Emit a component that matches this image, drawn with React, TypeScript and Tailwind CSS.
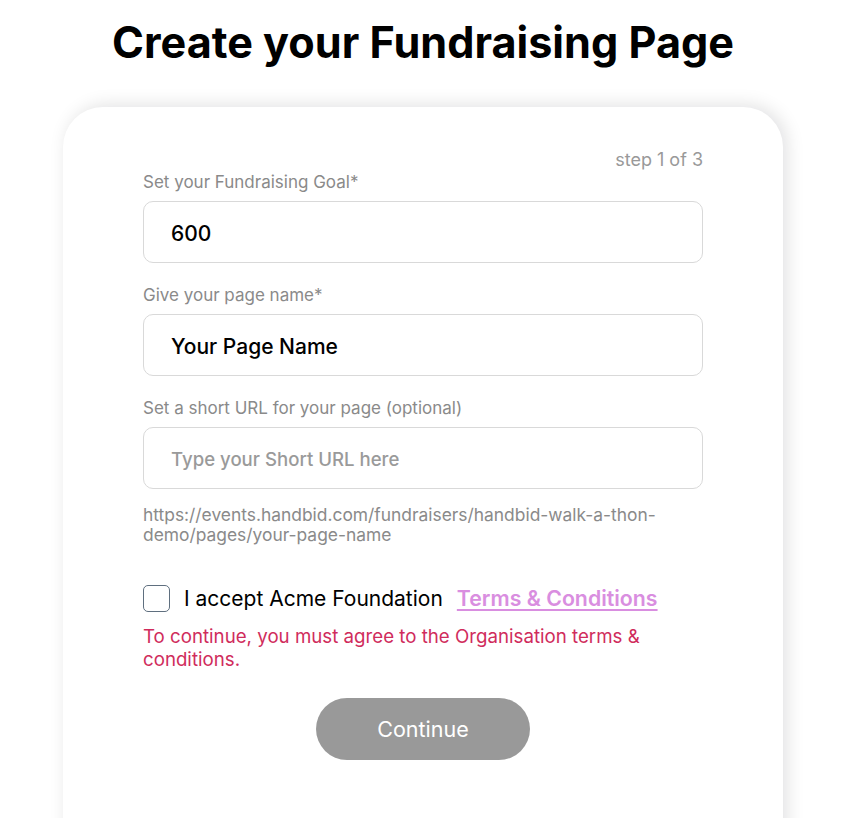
import React from "react";

const Field = ({
  label,
  value,
  placeholder,
}: {
  label: string;
  value?: string;
  placeholder?: string;
}) => (
  <div className="flex flex-col">
    <label className="text-[17px] leading-[22px] text-[#8a8a8a] mb-[8px]">{label}</label>
    <div className="h-[62px] rounded-[10px] border border-[#d9d9d9] flex items-center px-[27px] pt-[4px]">
      {value ? (
        <span className="text-[21px] font-medium text-black">{value}</span>
      ) : (
        <span className="text-[18.6px] font-medium text-[#9a9a9a]">{placeholder}</span>
      )}
    </div>
  </div>
);

export default function App() {
  return (
    <div className="h-[818px] overflow-hidden bg-white flex flex-col items-center pr-[18px] font-['Inter',sans-serif]">
      <h1 className="text-[43.2px] leading-[48px] font-bold text-black mt-[18px]">
        Create your Fundraising Page
      </h1>
      <div className="mt-[41px] w-[720px] shrink-0 rounded-[40px] bg-white shadow-[4px_-2px_18px_rgba(0,0,20,0.12)] px-[80px] pt-[42px] pb-[140px]">
        <div className="text-right text-[18px] leading-[22px] text-[#999]">step 1 of 3</div>
        <div className="flex flex-col gap-[21px]">
          <Field label="Set your Fundraising Goal*" value="600" />
          <Field label="Give your page name*" value="Your Page Name" />
          <div>
            <Field label="Set a short URL for your page (optional)" placeholder="Type your Short URL here" />
            <p className="mt-[16px] text-[17.4px] leading-[20px] text-[#8a8a8a]">
              https://events.handbid.com/fundraisers/handbid-walk-a-thon-demo/pages/your-page-name
            </p>
          </div>
        </div>
        <div className="mt-[40px] flex items-center h-[27px]">
          <span className="w-[27px] h-[27px] rounded-[5px] border border-[#5f6f7f] bg-white" />
          <span className="ml-[14px] text-[21px] text-black">I accept Acme Foundation</span>
          <a className="ml-[14px] text-[21.3px] font-semibold text-[#d98ee0] underline underline-offset-[3px]">
            Terms &amp; Conditions
          </a>
        </div>
        <p className="mt-[13px] text-[18.7px] leading-[23px] text-[#d02c5c]">
          To continue, you must agree to the Organisation terms &amp; conditions.
        </p>
        <div className="flex justify-center mt-[27px]">
          <button className="w-[214px] h-[62px] rounded-full bg-[#999] text-white text-[21.5px]">
            Continue
          </button>
        </div>
      </div>
    </div>
  );
}
